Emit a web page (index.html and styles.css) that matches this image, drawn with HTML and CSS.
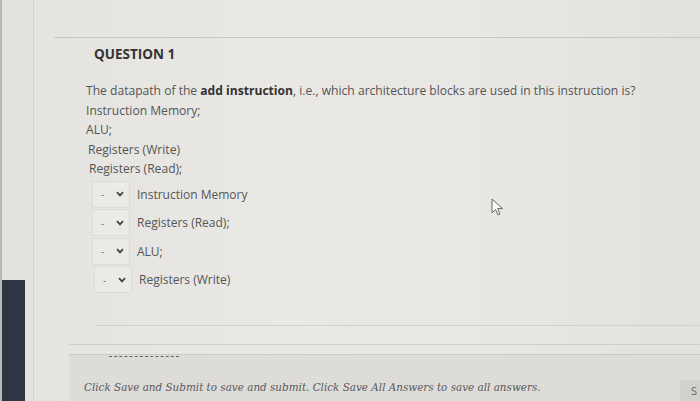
FILE: index.html
```html
<!DOCTYPE html>
<html>
<head>
<meta charset="utf-8">
<link rel="stylesheet" href="styles.css">
</head>
<body>
<div class="page">
  <div class="side"><div class="dark"></div></div>
  <div class="main">
    <div class="rule-top"></div>
    <h2 class="qtitle">QUESTION 1</h2>
    <div class="qbody">
      <p class="line">The datapath of the <b>add instruction</b>, i.e., which architecture blocks are used in this instruction is?</p>
      <p class="line">Instruction Memory;</p>
      <p class="line">ALU;</p>
      <p class="line s1">Registers (Write)</p>
      <p class="line s2">Registers (Read);</p>
    </div>
    <div class="answers">
      <div class="row"><div class="sel"><span class="dash">-</span><svg class="chev" width="8" height="6" viewBox="0 0 8 6"><path d="M1 1.2 L4 4.4 L7 1.2" fill="none" stroke="#444" stroke-width="1.8"/></svg></div><span class="lbl">Instruction Memory</span></div>
      <div class="row"><div class="sel"><span class="dash">-</span><svg class="chev" width="8" height="6" viewBox="0 0 8 6"><path d="M1 1.2 L4 4.4 L7 1.2" fill="none" stroke="#444" stroke-width="1.8"/></svg></div><span class="lbl">Registers (Read);</span></div>
      <div class="row"><div class="sel"><span class="dash">-</span><svg class="chev" width="8" height="6" viewBox="0 0 8 6"><path d="M1 1.2 L4 4.4 L7 1.2" fill="none" stroke="#444" stroke-width="1.8"/></svg></div><span class="lbl">ALU;</span></div>
      <div class="row r4"><div class="sel"><span class="dash">-</span><svg class="chev" width="8" height="6" viewBox="0 0 8 6"><path d="M1 1.2 L4 4.4 L7 1.2" fill="none" stroke="#444" stroke-width="1.8"/></svg></div><span class="lbl">Registers (Write)</span></div>
    </div>
    <div class="rule-a"></div>
    <div class="rule-b"></div>
    <div class="footer">
      <div class="frag"></div>
      <div class="foot-row">
        <p class="note">Click Save and Submit to save and submit. Click Save All Answers to save all answers.</p>
        <div class="btn">S</div>
      </div>
    </div>
  </div>
  <svg class="cursor" width="14" height="20" viewBox="0 0 14 20"><path d="M1 1 L1 15 L4.5 11.5 L7 17 L9 16 L6.6 10.6 L11.5 10.6 Z" fill="#fafaf8" stroke="#666" stroke-width="1"/></svg>
</div>
</body>
</html>
```

FILE: styles.css
```css
html, body {
  margin: 0;
  padding: 0;
}
body {
  background: #e7e6e2;
  font-family: "Open Sans", "Noto Sans", sans-serif;
  color: #555;
}
.page {
  position: relative;
  display: flex;
  width: 700px;
  height: 401px;
  overflow: hidden;
  background: linear-gradient(90deg, #e4e3df 0%, #e9e8e4 40%, #e8e7e3 70%, #e1e1dd 100%);
}
.side {
  width: 34px;
  flex: none;
  border-left: 2px solid #b9b8b4;
  box-sizing: border-box;
  border-right: 1px solid #d3d2ce;
  display: flex;
  flex-direction: column;
  justify-content: flex-end;
  background: #e3e2de;
}
.dark {
  width: 23px;
  height: 121px;
  background: #2f3541;
}
.main {
  flex: 1;
  display: flex;
  flex-direction: column;
  padding-top: 37px;
}
.rule-top {
  margin-left: 20px;
  border-top: 1px solid #c8c7c3;
}
.qtitle {
  margin: 7px 0 0 60px;
  font-size: 13.5px;
  line-height: 18px;
  font-weight: 700;
  color: #333;
}
.qbody {
  margin: 18px 0 0 52px;
}
.line {
  margin: 0;
  font-size: 12.1px;
  line-height: 19.5px;
  color: #555;
  white-space: nowrap;
}
.line b {
  color: #333;
}
.s1 { padding-left: 2px; }
.s2 { padding-left: 3px; }
.answers {
  margin: 2px 0 0 58px;
  display: flex;
  flex-direction: column;
  gap: 1.5px;
}
.row {
  display: flex;
  align-items: center;
  gap: 7px;
  height: 27px;
}
.r4 { padding-left: 2px; }
.sel {
  width: 38px;
  height: 27px;
  box-sizing: border-box;
  border: 1px solid #dcdbd7;
  background: #ebeae6;
  display: flex;
  align-items: center;
  padding-left: 8px;
  gap: 12px;
}
.dash {
  font-size: 10px;
  color: #777;
}
.chev {
  display: block;
}
.lbl {
  font-size: 12px;
  color: #555;
}
.rule-a {
  margin: 32px 0 0 62px;
  border-top: 1px solid #d2d1cd;
}
.rule-b {
  margin: 18px 0 0 35px;
  border-top: 1px solid #cfcecb;
}
.footer {
  margin: 9px 0 0 35px;
  flex: 1;
  background: #dddcd8;
  border-top: 1px solid #cacac6;
  display: flex;
  flex-direction: column;
}
.frag {
  margin: 1px 0 0 40px;
  width: 70px;
  border-top: 1.5px dashed #666;
}
.foot-row {
  display: flex;
  justify-content: space-between;
  align-items: flex-end;
  flex: 1;
}
.note {
  margin: 0 0 8px 15px;
  font-family: "DejaVu Serif", "Liberation Serif", serif;
  font-style: italic;
  font-size: 10.4px;
  color: #5a5a5a;
  white-space: nowrap;
}
.btn {
  width: 20px;
  height: 21px;
  background: #d1d1cd;
  font-size: 11px;
  color: #666;
  display: flex;
  align-items: center;
  justify-content: flex-end;
  padding-right: 3px;
  box-sizing: border-box;
}
.cursor {
  position: absolute;
  left: 491px;
  top: 198px;
}
```
